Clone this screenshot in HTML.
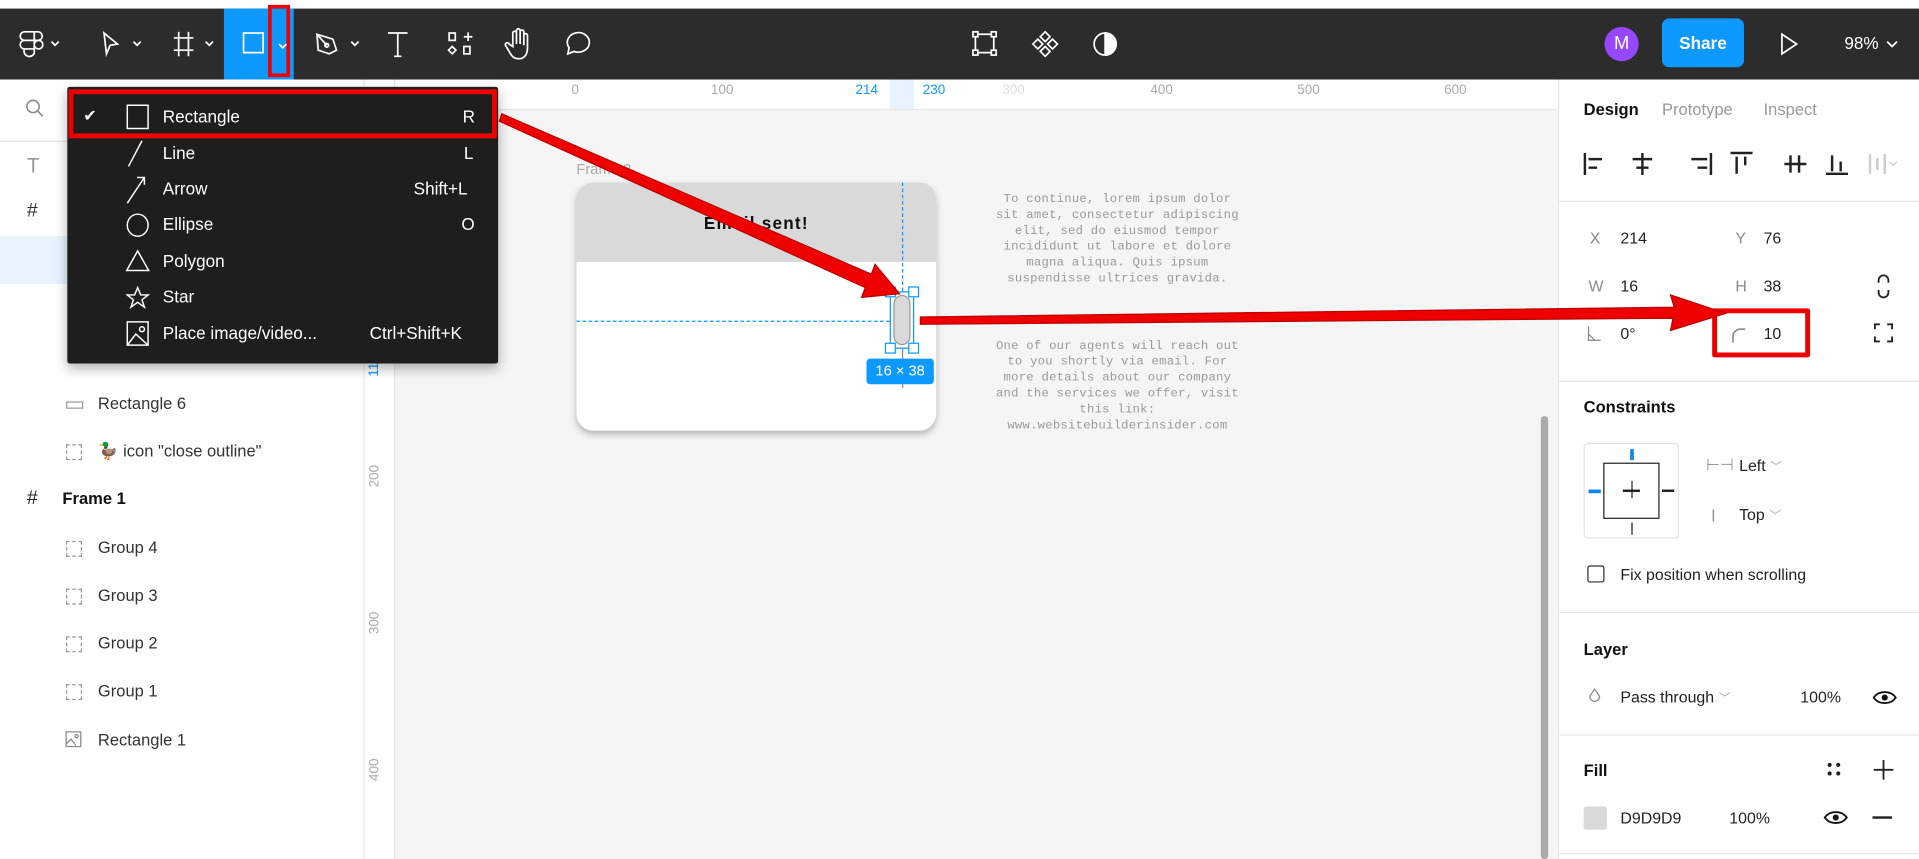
<!DOCTYPE html>
<html><head><meta charset="utf-8"><style>
html,body{margin:0;padding:0;width:1919px;height:859px;overflow:hidden;background:#fff}
#w{position:absolute;left:0;top:0;width:1568px;height:702px;transform:scale(1.22385);transform-origin:0 0;font-family:"Liberation Sans",sans-serif;font-size:13px;color:#222;overflow:hidden}
.a{position:absolute}
.t{position:absolute;white-space:nowrap}
.tb{background:#2c2c2c}
.ico{position:absolute;stroke:#fff;fill:none;stroke-width:1.4}
.mi{position:absolute;left:0;width:352px;height:29px;color:#fff;font-size:14px}
.mi span{position:absolute;top:6px}
.ly{position:absolute;left:80px;font-size:13.5px;color:#333}
.dot{position:absolute;left:54px;width:11px;height:11px;border:1px dashed #999}
.rp{position:absolute;left:1273px;top:65px;width:295px;height:637px;background:#fff;border-left:1px solid #e5e5e5}
.hr{position:absolute;left:0;width:295px;height:1px;background:#e6e6e6}
.lbl{color:#888}
.h{font-weight:bold;font-size:13.5px;color:#111}
.rl{position:absolute;font-size:11px;color:#aaa}
.para{position:absolute;left:806px;width:214px;text-align:center;font-family:"Liberation Mono",monospace;font-size:10px;color:#999;line-height:13px;letter-spacing:0.2px;white-space:nowrap}
</style></head><body><div id="w">
<!-- toolbar -->
<div class="a tb" style="left:0;top:7px;width:1568px;height:58px"></div>
<div class="a" style="left:183px;top:7px;width:57px;height:58px;background:#0d99ff"></div>
<div class="a" style="left:219px;top:4px;width:18px;height:59px;border:3px solid #e00;box-sizing:border-box"></div>
<svg class="ico" style="left:14px;top:24px" width="40" height="24"><path d="M6 2h8v7H6a3.5 3.5 0 0 1 0-7zM14 2h3a3.5 3.5 0 0 1 0 7h-3zM6 9h8v7H6a3.5 3.5 0 0 1 0-7zM14 12.5a3.5 3.5 0 1 0 7 0 3.5 3.5 0 1 0-7 0M6 16h8v3.5a3.5 3.5 0 1 1-8-3.5z"/><path d="M28 10l3 3 3-3"/></svg>
<svg class="ico" style="left:80px;top:24px" width="40" height="24"><path d="M5 3l11 9-6 1-3 7z"/><path d="M29 10l3 3 3-3"/></svg>
<svg class="ico" style="left:140px;top:24px" width="40" height="24"><path d="M6 2v20M14 2v20M2 7h16M2 17h16"/><path d="M28 10l3 3 3-3"/></svg>
<svg class="ico" style="left:197px;top:24px" width="40" height="24"><rect x="2" y="3" width="16" height="16"/><path d="M31 12l3 3 3-3"/></svg>
<svg class="ico" style="left:256px;top:24px" width="42" height="26"><path d="M3 4l13 4 3 9-6 3-9-3zM3 4l8 9"/><circle cx="11" cy="13" r="1.5"/><path d="M31 10l3 3 3-3"/></svg>
<svg class="ico" style="left:314px;top:24px" width="24" height="24"><path d="M3 3h16M11 3v19M8 22h6"/></svg>
<svg class="ico" style="left:365px;top:24px" width="24" height="24"><rect x="2" y="3" width="5" height="6"/><path d="M14 6h7M17.5 2.5v7"/><path d="M4.5 14l3 3-3 3-3-3z"/><rect x="14" y="14" width="5" height="6"/></svg>
<svg class="ico" style="left:411px;top:22px" width="26" height="30"><path d="M8 16V5a1.5 1.5 0 0 1 3 0v9V3a1.5 1.5 0 0 1 3 0v11V4a1.5 1.5 0 0 1 3 0v11V7a1.5 1.5 0 0 1 3 0v10c0 6-3 9-7 9s-6-2-8-6l-3-5a1.5 1.5 0 0 1 3-1z"/></svg>
<svg class="ico" style="left:459px;top:24px" width="26" height="24"><path d="M5 20l1-5a9 8 0 1 1 4 3z"/></svg>
<svg class="ico" style="left:793px;top:24px" width="24" height="24"><rect x="4" y="4" width="15" height="15"/><rect x="2" y="2" width="4" height="4" fill="#2c2c2c"/><rect x="17" y="2" width="4" height="4" fill="#2c2c2c"/><rect x="2" y="17" width="4" height="4" fill="#2c2c2c"/><rect x="17" y="17" width="4" height="4" fill="#2c2c2c"/></svg>
<svg class="ico" style="left:842px;top:24px" width="24" height="24"><path d="M12 2l4 4-4 4-4-4zM12 14l4 4-4 4-4-4zM6 8l4 4-4 4-4-4zM18 8l4 4-4 4-4-4z"/></svg>
<svg class="ico" style="left:892px;top:25px" width="24" height="24"><circle cx="11" cy="11" r="9"/><path d="M11 2a9 9 0 0 1 0 18z" fill="#fff"/></svg>
<div class="a" style="left:1311px;top:22px;width:28px;height:28px;border-radius:50%;background:#9747ff;color:#fff;text-align:center;line-height:28px;font-size:15px">M</div>
<div class="a" style="left:1358px;top:15px;width:67px;height:40px;border-radius:6px;background:#0d99ff;color:#fff;text-align:center;line-height:40px;font-weight:bold;font-size:14px">Share</div>
<svg class="ico" style="left:1452px;top:26px" width="20" height="20"><path d="M4 2l12 8-12 8z"/></svg>
<div class="t" style="left:1507px;top:27px;color:#fff;font-size:14px">98%</div>
<svg class="ico" style="left:1540px;top:31px" width="12" height="10"><path d="M2 3l4 4 4-4"/></svg>
<!-- left panel -->
<div class="a" style="left:0;top:65px;width:297px;height:637px;background:#fff;border-right:1px solid #e5e5e5"></div>
<div class="a" style="left:0;top:115px;width:297px;height:1px;background:#e5e5e5"></div>
<div class="a" style="left:0;top:193px;width:297px;height:39px;background:#e5f4ff"></div>
<svg class="a" style="left:20px;top:80px" width="18" height="18"><circle cx="7" cy="7" r="5" fill="none" stroke="#888" stroke-width="1.3"/><path d="M11 11l4 4" stroke="#888" stroke-width="1.3"/></svg>
<div class="t" style="left:22px;top:126px;color:#999;font-size:17px">T</div>
<div class="t" style="left:22px;top:164px;color:#333;font-size:16px">#</div>
<div class="a" style="left:54px;top:328px;width:12px;height:4px;border:1px solid #999"></div>
<div class="ly" style="top:322px">Rectangle 6</div>
<div class="dot" style="top:363px"></div><div class="ly" style="top:361px">🦆 icon "close outline"</div>
<div class="t" style="left:22px;top:399px;font-size:16px">#</div><div class="ly" style="left:51px;top:400px;font-weight:bold;color:#111">Frame 1</div>
<div class="dot" style="top:442px"></div><div class="ly" style="top:440px">Group 4</div>
<div class="dot" style="top:481px"></div><div class="ly" style="top:479px">Group 3</div>
<div class="dot" style="top:520px"></div><div class="ly" style="top:518px">Group 2</div>
<div class="dot" style="top:559px"></div><div class="ly" style="top:557px">Group 1</div>
<svg class="a" style="left:53px;top:597px" width="14" height="14"><rect x="1" y="1" width="12" height="12" fill="none" stroke="#888"/><path d="M1 11l4-4 4 5" fill="none" stroke="#888"/><circle cx="9.5" cy="4.5" r="1.3" fill="none" stroke="#888"/></svg>
<div class="ly" style="top:597px">Rectangle 1</div>
<!-- canvas -->
<div class="a" style="left:298px;top:65px;width:975px;height:637px;background:#f5f5f5"></div>
<div class="a" style="left:298px;top:65px;width:975px;height:24px;background:#fff;border-bottom:1px solid #e5e5e5"></div>
<div class="a" style="left:298px;top:65px;width:24px;height:637px;background:#fff;border-right:1px solid #e5e5e5"></div>
<div class="a" style="left:727px;top:65px;width:20px;height:24px;background:#e5f4ff"></div>
<div class="rl" style="left:467px;top:68px">0</div><div class="rl" style="left:581px;top:68px">100</div>
<div class="rl" style="left:699px;top:68px;color:#0d99ff">214</div><div class="rl" style="left:754px;top:68px;color:#0d99ff">230</div>
<div class="rl" style="left:819px;top:68px;color:#ddd">300</div><div class="rl" style="left:940px;top:68px">400</div><div class="rl" style="left:1060px;top:68px">500</div><div class="rl" style="left:1180px;top:68px">600</div>
<div class="rl" style="left:297px;top:383px;transform:rotate(-90deg)">200</div>
<div class="rl" style="left:297px;top:503px;transform:rotate(-90deg)">300</div>
<div class="rl" style="left:297px;top:623px;transform:rotate(-90deg)">400</div>
<div class="rl" style="left:297px;top:293px;transform:rotate(-90deg);color:#0d99ff">114</div>
<div class="a" style="left:1259px;top:340px;width:6px;height:362px;background:#aaa;border-radius:3px"></div>
<div class="t" style="left:471px;top:131px;color:#aaa;font-size:12px">Frame 2</div>
<div class="a" style="left:471px;top:149px;width:294px;height:203px;border-radius:14px;background:#fff;box-shadow:0 3px 5px rgba(0,0,0,.25);overflow:hidden"><div class="a" style="left:0;top:0;width:294px;height:65px;background:#d9d9d9"></div><div class="t" style="left:0;width:294px;top:25px;text-align:center;font-weight:bold;font-size:14px;letter-spacing:1px;color:#111">Email sent!</div></div>
<div class="a" style="left:737px;top:149px;height:89px;border-left:1px dashed #0d99ff"></div>
<div class="a" style="left:471px;top:262px;width:256px;border-top:1px dashed #0d99ff"></div>
<div class="a" style="left:737px;top:285px;height:32px;border-left:1px solid #888"></div>
<div class="a" style="left:727px;top:238px;width:20px;height:47px;border:1px solid #0d99ff;box-sizing:border-box"><div class="a" style="left:2px;top:2px;width:14px;height:41px;border-radius:8px;background:#d9d9d9;border:1px solid #999;box-sizing:border-box"></div></div>
<div class="a" style="left:723px;top:234px;width:7px;height:7px;background:#fff;border:1px solid #0d99ff"></div>
<div class="a" style="left:742px;top:234px;width:7px;height:7px;background:#fff;border:1px solid #0d99ff"></div>
<div class="a" style="left:723px;top:280px;width:7px;height:7px;background:#fff;border:1px solid #0d99ff"></div>
<div class="a" style="left:742px;top:280px;width:7px;height:7px;background:#fff;border:1px solid #0d99ff"></div>
<div class="a" style="left:708px;top:293px;width:55px;height:21px;background:#0d99ff;color:#fff;border-radius:3px;text-align:center;line-height:21px;font-size:12px">16 × 38</div>
<div class="para" style="top:157px">To continue, lorem ipsum dolor<br>sit amet, consectetur adipiscing<br>elit, sed do eiusmod tempor<br>incididunt ut labore et dolore<br>magna aliqua. Quis ipsum<br>suspendisse ultrices gravida.</div>
<div class="para" style="top:277px">One of our agents will reach out<br>to you shortly via email. For<br>more details about our company<br>and the services we offer, visit<br>this link:<br>www.websitebuilderinsider.com</div>
<!-- right panel -->
<div class="rp">
<div class="t h" style="left:20px;top:17px">Design</div><div class="t" style="left:84px;top:17px;color:#999;font-size:13.5px">Prototype</div><div class="t" style="left:167px;top:17px;color:#999;font-size:13.5px">Inspect</div>
<svg class="a" style="left:18px;top:58px" width="260" height="22" fill="none" stroke="#222" stroke-width="2"><path d="M3 2v18M6 7h11M6 14h7"/><path d="M50 2v18M42 7h16M45 14h10"/><path d="M106 2v18M90 7h13M95 14h8"/><path d="M122 2h18M127 5v14M134 5v7"/><path d="M166 11h18M171 4v14M178 4v14"/><path d="M200 19h18M205 4v13M212 9v8"/><path d="M236 3v16M242 6v10M248 3v16" stroke="#ccc"/><path d="M252 9l3 3 3-3" stroke="#ccc" stroke-width="1"/></svg>
<div class="hr" style="top:99px"></div>
<div class="t lbl" style="left:25px;top:122px">X</div><div class="t" style="left:50px;top:122px">214</div>
<div class="t lbl" style="left:144px;top:122px">Y</div><div class="t" style="left:167px;top:122px">76</div>
<div class="t lbl" style="left:24px;top:161px">W</div><div class="t" style="left:50px;top:161px">16</div>
<div class="t lbl" style="left:144px;top:161px">H</div><div class="t" style="left:167px;top:161px">38</div>
<svg class="a" style="left:258px;top:159px" width="14" height="20" fill="none" stroke="#222" stroke-width="1.5"><path d="M3 7V5a4 4 0 0 1 8 0v2M3 13v2a4 4 0 0 0 8 0v-2"/></svg>
<svg class="a" style="left:22px;top:201px" width="14" height="14" fill="none" stroke="#888"><path d="M2 1v11h10M2 7l5 5"/></svg>
<div class="t" style="left:50px;top:200px">0°</div>
<svg class="a" style="left:140px;top:202px" width="14" height="14" fill="none" stroke="#888" stroke-width="1.3"><path d="M2 13V8a6 6 0 0 1 6-6h4"/></svg>
<div class="t" style="left:167px;top:200px">10</div>
<svg class="a" style="left:257px;top:199px" width="16" height="16" fill="none" stroke="#222" stroke-width="1.5"><path d="M1 5V1h4M11 1h4v4M15 11v4h-4M5 15H1v-4"/></svg>
<div class="a" style="left:125px;top:187px;width:80px;height:40px;border:4px solid #e00;box-sizing:border-box;border-radius:2px"></div>
<div class="hr" style="top:246px"></div>
<div class="t h" style="left:20px;top:260px">Constraints</div>
<div class="a" style="left:20px;top:297px;width:78px;height:78px;border:1px solid #e5e5e5;border-radius:3px;box-sizing:border-box"></div>
<div class="a" style="left:36px;top:313px;width:46px;height:46px;border:1px solid #222;box-sizing:border-box"></div>
<div class="a" style="left:52px;top:335px;width:14px;height:1.5px;background:#222"></div><div class="a" style="left:58.5px;top:328px;width:1.5px;height:14px;background:#222"></div>
<div class="a" style="left:58px;top:302px;width:3px;height:9px;background:#0d87ea"></div>
<div class="a" style="left:24px;top:335px;width:10px;height:3px;background:#0d87ea"></div>
<div class="a" style="left:84px;top:335px;width:10px;height:1.5px;background:#222"></div>
<div class="a" style="left:58.5px;top:362px;width:1.5px;height:10px;background:#222"></div>
<div class="t" style="left:120px;top:307px;color:#999">⊢⊣</div><div class="t" style="left:147px;top:308px">Left <span style="color:#aaa;font-size:10px">﹀</span></div>
<div class="t" style="left:124px;top:348px;color:#999;font-size:14px">I</div><div class="t" style="left:147px;top:348px">Top <span style="color:#aaa;font-size:10px">﹀</span></div>
<div class="a" style="left:23px;top:397px;width:14px;height:14px;border:1.3px solid #333;border-radius:2px;box-sizing:border-box"></div>
<div class="t" style="left:50px;top:397px">Fix position when scrolling</div>
<div class="hr" style="top:435px"></div>
<div class="t h" style="left:20px;top:458px">Layer</div>
<svg class="a" style="left:22px;top:496px" width="14" height="16" fill="none" stroke="#888"><path d="M7 2l4 6a4 4 0 1 1-8 0z"/></svg>
<div class="t" style="left:50px;top:497px">Pass through <span style="color:#aaa;font-size:10px">﹀</span></div>
<div class="t" style="left:197px;top:497px">100%</div>
<svg class="a" style="left:256px;top:498px" width="20" height="14"><path d="M1 7c4-6 14-6 18 0-4 6-14 6-18 0z" fill="none" stroke="#111" stroke-width="1.5"/><circle cx="10" cy="7" r="2.5" fill="#111"/></svg>
<div class="hr" style="top:535px"></div>
<div class="t h" style="left:20px;top:557px">Fill</div>
<svg class="a" style="left:218px;top:557px" width="14" height="14" fill="#222"><circle cx="3" cy="3" r="1.7"/><circle cx="10" cy="3" r="1.7"/><circle cx="3" cy="10" r="1.7"/><circle cx="10" cy="10" r="1.7"/></svg>
<svg class="a" style="left:256px;top:555px" width="18" height="18" stroke="#222" stroke-width="1.5"><path d="M9 1v16M1 9h16"/></svg>
<div class="a" style="left:20px;top:594px;width:19px;height:19px;background:#d9d9d9;border-radius:2px"></div>
<div class="t" style="left:50px;top:596px">D9D9D9</div><div class="t" style="left:139px;top:596px">100%</div>
<svg class="a" style="left:216px;top:596px" width="20" height="14"><path d="M1 7c4-6 14-6 18 0-4 6-14 6-18 0z" fill="none" stroke="#111" stroke-width="1.5"/><circle cx="10" cy="7" r="2.5" fill="#111"/></svg>
<div class="a" style="left:256px;top:602px;width:16px;height:1.5px;background:#222"></div>
<div class="hr" style="top:632px"></div>
</div>
<!-- dropdown menu -->
<div class="a" style="left:55px;top:71px;width:352px;height:226px;background:#1e1e1e;border-radius:2px;box-shadow:0 4px 10px rgba(0,0,0,.3)">
<div class="mi" style="top:10px"><span style="left:13px;font-size:13px">✔</span><span style="left:78px">Rectangle</span><span style="left:323px">R</span></div>
<div class="mi" style="top:40px"><span style="left:78px">Line</span><span style="left:324px">L</span></div>
<div class="mi" style="top:69px"><span style="left:78px">Arrow</span><span style="left:283px">Shift+L</span></div>
<div class="mi" style="top:98px"><span style="left:78px">Ellipse</span><span style="left:322px">O</span></div>
<div class="mi" style="top:128px"><span style="left:78px">Polygon</span></div>
<div class="mi" style="top:157px"><span style="left:78px">Star</span></div>
<div class="mi" style="top:187px"><span style="left:78px">Place image/video...</span><span style="left:247px">Ctrl+Shift+K</span></div>
<svg class="a" style="left:47px;top:12px" width="22" height="210" fill="none" stroke="#fff" stroke-width="1.2"><rect x="2" y="3" width="17" height="19"/><path d="M3 53l11-21"/><path d="M2 83l14-21M10 62h6v6"/><ellipse cx="10.5" cy="101" rx="8.5" ry="9"/><path d="M10.5 122l9 16H1.5z"/><path d="M10.5 152l2.5 6h6l-5 4 2 6-5.5-4-5.5 4 2-6-5-4h6z"/><rect x="2" y="180" width="17" height="19"/><path d="M2 199l7-9 10 9"/><circle cx="14" cy="186" r="2"/></svg>
</div>
<div class="a" style="left:56px;top:73px;width:350px;height:40px;border:4px solid #e00;box-sizing:border-box"></div>
<!-- red arrows -->
<svg class="a" style="left:0;top:0" width="1568" height="702">
<path d="M410 93L712 224l3-8 20 24-31 3 3-8L408 99z" fill="#e00" stroke="#b00" stroke-width="1"/>
<path d="M752 259L1368 251l-3-10 45 15-45 14 2-10L752 265z" fill="#e00" stroke="#b00" stroke-width="1"/></svg>
</div></body></html>
